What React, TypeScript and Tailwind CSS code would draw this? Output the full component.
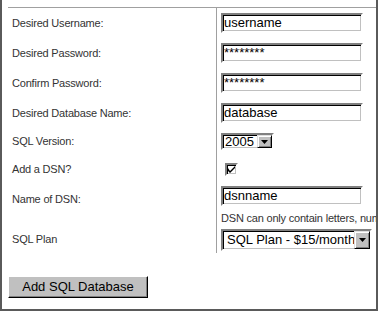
import React from 'react';

const inset =
  'border-2 border-t-[#808080] border-l-[#808080] border-b-white border-r-white shadow-[inset_1px_1px_0_#000,inset_-1px_-1px_0_#c0c0c0] bg-white';

function TextBox({ value, small }: { value: string; small?: boolean }) {
  return (
    <div className={`${inset} w-[142px] h-[20px] flex items-center pl-[1px] text-[13px] leading-[16px] text-black whitespace-nowrap overflow-hidden`}>
      <span className={small ? 'relative top-[0px]' : ''}>{value}</span>
    </div>
  );
}

function DropArrow({ w, h }: { w: string; h: string }) {
  return (
    <div className={`${w} ${h} bg-[#c0c0c0] border border-t-[#dfdfdf] border-l-[#dfdfdf] border-b-black border-r-black shadow-[inset_1px_1px_0_#fff,inset_-1px_-1px_0_#808080] flex items-center justify-center shrink-0`}>
      <svg width="7" height="4" viewBox="0 0 7 4">
        <path d="M0 0h7L3.5 4z" fill="#000" />
      </svg>
    </div>
  );
}

function Row({ label, h, children, labelClass = 'items-center' }: { label: string; h: string; children: React.ReactNode; labelClass?: string }) {
  return (
    <div className={`flex ${h}`}>
      <div className={`w-[209px] shrink-0 border-r border-[#a0a0a0] flex ${labelClass} pl-[4px] text-[11px] tracking-[-0.2px] text-[#333]`}>
        {label}
      </div>
      <div className="flex flex-col justify-center pl-[4px]">{children}</div>
    </div>
  );
}

export default function App() {
  return (
    <div
      className="w-[378px] h-[311px] overflow-hidden bg-white border-x-2 border-b-2 border-[#5a5a5a]"
      style={{ fontFamily: '"Liberation Sans", Arial, sans-serif' }}
    >
      <div className="pt-[7px] pl-[6px]">
        <div className="w-[440px] border-t border-[#a0a0a0]">
          <Row label="Desired Username:" h="h-[30px]">
            <TextBox value="username" />
          </Row>
          <Row label="Desired Password:" h="h-[30px]">
            <TextBox value="********" small />
          </Row>
          <Row label="Confirm Password:" h="h-[30px]">
            <TextBox value="********" small />
          </Row>
          <Row label="Desired Database Name:" h="h-[30px]">
            <TextBox value="database" />
          </Row>
          <Row label="SQL Version:" h="h-[27px]">
            <div className={`${inset} w-[53px] h-[17px] flex items-stretch`}>
              <div className="flex-1 flex items-center pl-[2px] text-[13px] leading-[13px] text-black">2005</div>
              <DropArrow w="w-[15px]" h="h-[13px]" />
            </div>
          </Row>
          <Row label="Add a DSN?" h="h-[29px]">
            <div className={`${inset} ml-[4px] w-[13px] h-[13px] flex items-center justify-center`}>
              <svg width="7" height="7" viewBox="0 0 7 7">
                <path d="M0 2v3l2 2 5-5V0L2 5z" fill="#000" />
              </svg>
            </div>
          </Row>
          <Row label="Name of DSN:" h="h-[42px]" labelClass="items-start pt-[7px]">
            <div className="flex flex-col justify-start h-full pt-[2px]">
              <TextBox value="dsnname" />
              <div className="mt-[6px] text-[11px] leading-[13px] tracking-[-0.2px] text-[#333] whitespace-nowrap">
                DSN can only contain letters, numbers and underscores
              </div>
            </div>
          </Row>
          <Row label="SQL Plan" h="h-[27px]">
            <div className={`${inset} w-[151px] h-[22px] flex items-stretch`}>
              <div className="flex-1 flex items-center pl-[4px] text-[13px] leading-[16px] text-black whitespace-nowrap overflow-hidden">
                SQL Plan - $15/month
              </div>
              <DropArrow w="w-[16px]" h="h-[18px]" />
            </div>
          </Row>
        </div>
        <button className="mt-[23px] w-[140px] h-[22px] bg-[#c0c0c0] border border-t-white border-l-white border-b-black border-r-black shadow-[inset_-1px_-1px_0_#808080] text-[13px] text-black flex items-center justify-center">
          Add SQL Database
        </button>
      </div>
    </div>
  );
}
